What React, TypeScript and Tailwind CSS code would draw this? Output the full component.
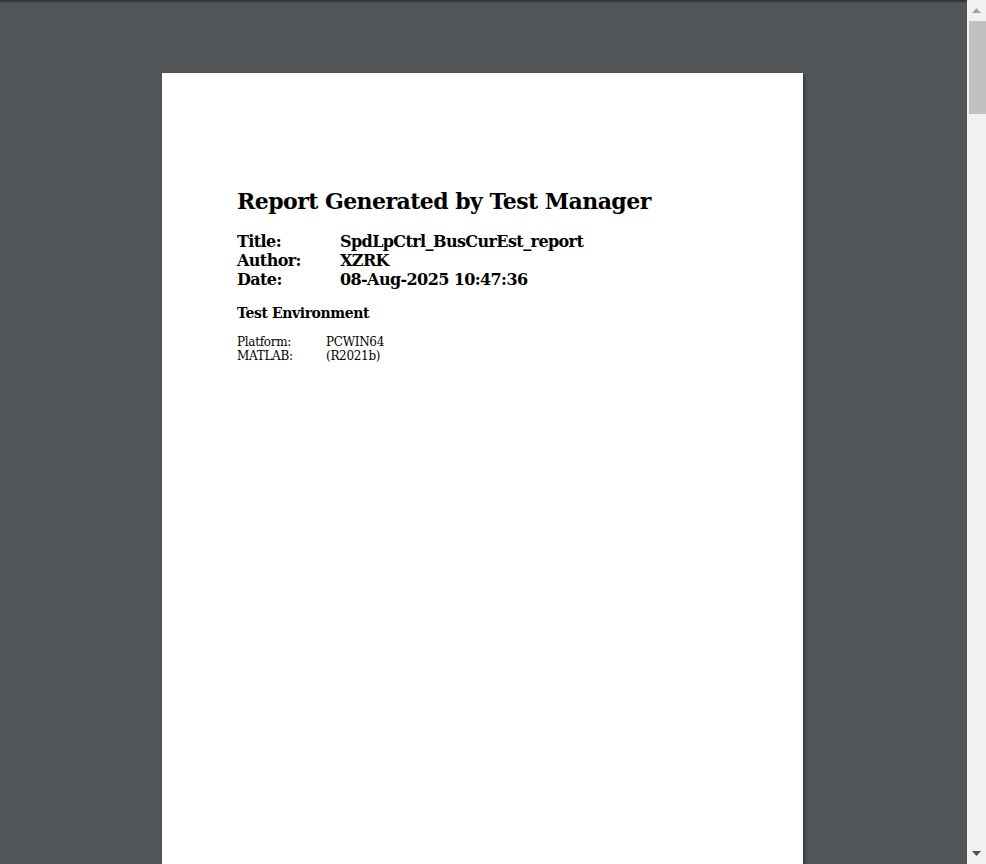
import React from "react";

const serif = { fontFamily: '"DejaVu Serif", "Liberation Serif", serif' };

function Scrollbar() {
  return (
    <div className="w-[19px] h-full bg-[#f1f1f1] flex flex-col items-center shrink-0">
      <div className="h-[21px] w-full flex items-center justify-center">
        <svg width="9" height="5" viewBox="0 0 9 5">
          <polygon points="4.5,0 9,5 0,5" fill="#a3a3a3" />
        </svg>
      </div>
      <div className="ml-[2px] w-[17px] h-[93px] bg-[#c1c1c1]" />
      <div className="flex-1" />
      <div className="h-[21px] w-full flex items-center justify-center">
        <svg width="9" height="5" viewBox="0 0 9 5">
          <polygon points="0,0 9,0 4.5,5" fill="#505050" />
        </svg>
      </div>
    </div>
  );
}

function Row({ label, value }: { label: string; value: string }) {
  return (
    <div className="flex">
      <div className="w-[103px] shrink-0">{label}</div>
      <div>{value}</div>
    </div>
  );
}

function EnvRow({ label, value }: { label: string; value: string }) {
  return (
    <div className="flex">
      <div className="w-[89px] shrink-0">{label}</div>
      <div>{value}</div>
    </div>
  );
}

export default function App() {
  return (
    <div className="h-[864px] w-[986px] flex overflow-hidden">
      <div className="flex-1 relative bg-[#525659] overflow-hidden">
        <div className="absolute top-0 left-0 right-0 h-[3px] bg-gradient-to-b from-[#2a2c2e] to-transparent" />
        <div className="pt-[73px] pl-[162px] flex">
          <div className="w-[641px] h-[900px] bg-white shadow-[2px_2px_3px_rgba(0,0,0,0.35)] pl-[75px] pt-[113px] text-black" style={serif}>
            <h1 className="text-[22px] font-bold leading-[30px] tracking-[-0.55px]">
              Report Generated by Test Manager
            </h1>
            <div className="mt-[16px] text-[16px] font-bold leading-[19px] tracking-[-0.6px]">
              <Row label="Title:" value="SpdLpCtrl_BusCurEst_report" />
              <Row label="Author:" value="XZRK" />
              <Row label="Date:" value="08-Aug-2025 10:47:36" />
            </div>
            <h2 className="mt-[14px] text-[14px] font-bold leading-[20px] tracking-[-0.4px]">
              Test Environment
            </h2>
            <div className="mt-[12px] text-[12px] leading-[14px] tracking-[-0.3px]">
              <EnvRow label="Platform:" value="PCWIN64" />
              <EnvRow label="MATLAB:" value="(R2021b)" />
            </div>
          </div>
        </div>
      </div>
      <Scrollbar />
    </div>
  );
}
